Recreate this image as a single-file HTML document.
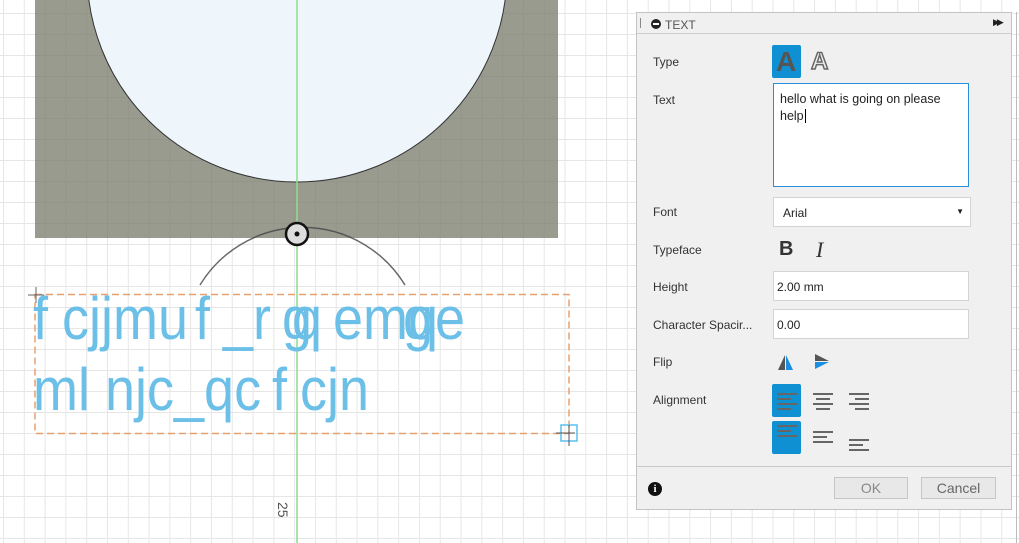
<!DOCTYPE html><html><head><meta charset="utf-8"><style>
body{margin:0;width:1019px;height:543px;overflow:hidden;position:relative;font-family:"Liberation Sans",sans-serif;
background-color:#fff;
background-image:linear-gradient(#e6e6e6 1px,transparent 1px),linear-gradient(90deg,#e6e6e6 1px,transparent 1px);
background-size:20.8px 21px;background-position:3px 13px;}
.abs{position:absolute}
.g{position:absolute;color:#6cc0e8;font-size:60px;line-height:60px;transform-origin:0 0;transform:scaleX(.9);white-space:pre}
.lbl{position:absolute;left:16px;font-size:12px;color:#333}
.inp{position:absolute;left:136px;width:196px;height:30px;background:#fff;border:1px solid #d4d4d4;box-sizing:border-box;font-size:12px;color:#222;padding:8px 0 0 3px}
.btn{position:absolute;background:#0e90d2;border-radius:2px}
.bar{position:absolute;height:2px;background:#666}
</style></head><body>
<svg class="abs" style="left:0;top:0" width="640" height="543">
<defs><clipPath id="c"><rect x="35" y="0" width="523" height="238"/></clipPath></defs>
<rect x="35" y="0" width="523" height="238" fill="rgba(120,122,105,0.75)"/>
<circle cx="297" cy="-28" r="210" fill="#eef6fc" stroke="#333" stroke-width="1" clip-path="url(#c)"/>
<path d="M200 285 A120 120 0 0 1 405 285" fill="none" stroke="#444" stroke-width="1.5" opacity=".8"/>
<line x1="297" y1="0" x2="297" y2="543" stroke="#8fdc8f" stroke-width="1.5"/>
<circle cx="297" cy="234" r="11" fill="#ddd" stroke="#111" stroke-width="2.5"/>
<circle cx="297" cy="234" r="2.5" fill="#111"/>
<rect x="35" y="294.5" width="534" height="139" fill="none" stroke="#e8a070" stroke-width="1.5" stroke-dasharray="7,4"/>
<path d="M28 295H44M36 287V303" stroke="#666" stroke-width="1"/>
<rect x="561" y="425" width="16" height="16" fill="none" stroke="#5bc0f0" stroke-width="1.5"/>
<path d="M556 433H575M569 425V446" stroke="#555"/>
<text x="0" y="0" transform="translate(278,502) rotate(90)" font-size="14" fill="#555" font-family="Liberation Sans">25</text>
</svg>
<div class="g" style="left:33px;top:289px">f</div>
<div class="g" style="left:62px;top:289px">cjjmu</div>
<div class="g" style="left:195px;top:289px">f</div>
<div class="g" style="left:223px;top:289px">_r</div>
<div class="g" style="left:282px;top:289px">g</div>
<div class="g" style="left:292px;top:289px">q</div>
<div class="g" style="left:333px;top:289px">emq</div>
<div class="g" style="left:403px;top:289px">g</div>
<div class="g" style="left:435px;top:289px">e</div>
<div class="g" style="left:33px;top:360px">ml</div>
<div class="g" style="left:105px;top:360px">njc_qc</div>
<div class="g" style="left:272px;top:360px">f</div>
<div class="g" style="left:300px;top:360px">cjn</div>

<div class="abs" style="left:636px;top:12px;width:376px;height:498px;background:#f0f0f0;border:1px solid #c4c4c4;box-sizing:border-box">
 <div class="abs" style="left:0;top:0;width:374px;height:20px;border-bottom:1px solid #ccc">
  <div class="abs" style="left:3px;top:5px;width:1px;height:10px;background:#888"></div>
  <div class="abs" style="left:14px;top:6px;width:10px;height:10px;border-radius:50%;background:#222"><div style="position:absolute;left:2px;top:4px;width:6px;height:2px;background:#fff"></div></div>
  <div class="abs" style="left:28px;top:5px;font-size:12px;color:#555">TEXT</div>
  <div class="abs" style="left:356px;top:4px;font-size:9px;color:#222;letter-spacing:-3px">▶▶</div>
 </div>
 <div class="lbl" style="top:42px">Type</div>
 <div class="btn" style="left:135px;top:32px;width:29px;height:33px"></div>
 <div class="abs" style="left:139px;top:33px;font-size:28px;font-weight:bold;color:#555">A</div>
 <div class="abs" style="left:174px;top:35px;font-size:24px;font-weight:bold;color:#f0f0f0;-webkit-text-stroke:1.5px #666">A</div>
 <div class="lbl" style="top:80px">Text</div>
 <div class="abs" style="left:136px;top:70px;width:196px;height:104px;background:#fff;border:1px solid #2a8fd8;box-sizing:border-box;font-size:12.5px;color:#222;padding:7px 14px 7px 6px;line-height:17px">hello what is going on please help<span style="border-left:1px solid #000;margin-left:1px"></span></div>
 <div class="lbl" style="top:192px">Font</div>
 <div class="inp" style="top:184px;left:136px;width:198px;padding-left:9px">Arial<span style="position:absolute;right:6px;top:9px;font-size:8px">▼</span></div>
 <div class="lbl" style="top:230px">Typeface</div>
 <div class="abs" style="left:142px;top:225px;font-size:20px;font-weight:bold;color:#333">B</div>
 <div class="abs" style="left:179px;top:224px;font-size:22px;font-style:italic;font-family:'Liberation Serif',serif;color:#333">I</div>
 <div class="lbl" style="top:267px">Height</div>
 <div class="inp" style="top:258px">2.00 mm</div>
 <div class="lbl" style="top:305px">Character Spacir...</div>
 <div class="inp" style="top:296px">0.00</div>
 <div class="lbl" style="top:342px">Flip</div>
 <svg class="abs" style="left:140px;top:339px" width="60" height="20"><path d="M1 18L8 3V18Z" fill="#555"/><path d="M9 3L16 18H9Z" fill="#1a8ee0"/><path d="M38 2L52 9H38Z" fill="#555"/><path d="M38 10H52L38 17Z" fill="#1a8ee0"/></svg>
 <div class="lbl" style="top:380px">Alignment</div>
 <div class="btn" style="left:135px;top:371px;width:29px;height:33px"></div>
 <div class="bar" style="left:140px;top:380px;width:20px"></div><div class="bar" style="left:140px;top:385px;width:14px"></div><div class="bar" style="left:140px;top:390px;width:20px"></div><div class="bar" style="left:140px;top:395px;width:14px"></div>
 <div class="bar" style="left:176px;top:380px;width:20px"></div><div class="bar" style="left:179px;top:385px;width:14px"></div><div class="bar" style="left:176px;top:390px;width:20px"></div><div class="bar" style="left:179px;top:395px;width:14px"></div>
 <div class="bar" style="left:212px;top:380px;width:20px"></div><div class="bar" style="left:218px;top:385px;width:14px"></div><div class="bar" style="left:212px;top:390px;width:20px"></div><div class="bar" style="left:218px;top:395px;width:14px"></div>
 <div class="btn" style="left:135px;top:408px;width:29px;height:33px"></div>
 <div class="bar" style="left:140px;top:412px;width:20px"></div><div class="bar" style="left:140px;top:417px;width:14px"></div><div class="bar" style="left:140px;top:422px;width:20px"></div>
 <div class="bar" style="left:176px;top:418px;width:20px"></div><div class="bar" style="left:176px;top:423px;width:14px"></div><div class="bar" style="left:176px;top:428px;width:20px"></div>
 <div class="bar" style="left:212px;top:426px;width:20px"></div><div class="bar" style="left:212px;top:431px;width:14px"></div><div class="bar" style="left:212px;top:436px;width:20px"></div>
 <div class="abs" style="left:0;top:453px;width:374px;height:1px;background:#c8c8c8"></div>
 <div class="abs" style="left:11px;top:469px;width:14px;height:14px;border-radius:50%;background:#111;color:#fff;font-size:11px;font-weight:bold;text-align:center;line-height:14px;font-family:'Liberation Serif',serif">i</div>
 <div class="abs" style="left:197px;top:464px;width:74px;height:22px;border:1px solid #c6c6c6;background:#e8e8e8;box-sizing:border-box;text-align:center;font-size:14px;line-height:20px;color:#888">OK</div>
 <div class="abs" style="left:284px;top:464px;width:75px;height:22px;border:1px solid #c6c6c6;background:#e8e8e8;box-sizing:border-box;text-align:center;font-size:14px;line-height:20px;color:#666">Cancel</div>
</div>
<div class="abs" style="left:1016px;top:12px;width:1px;height:531px;background:#bbb"></div>
</body></html>
